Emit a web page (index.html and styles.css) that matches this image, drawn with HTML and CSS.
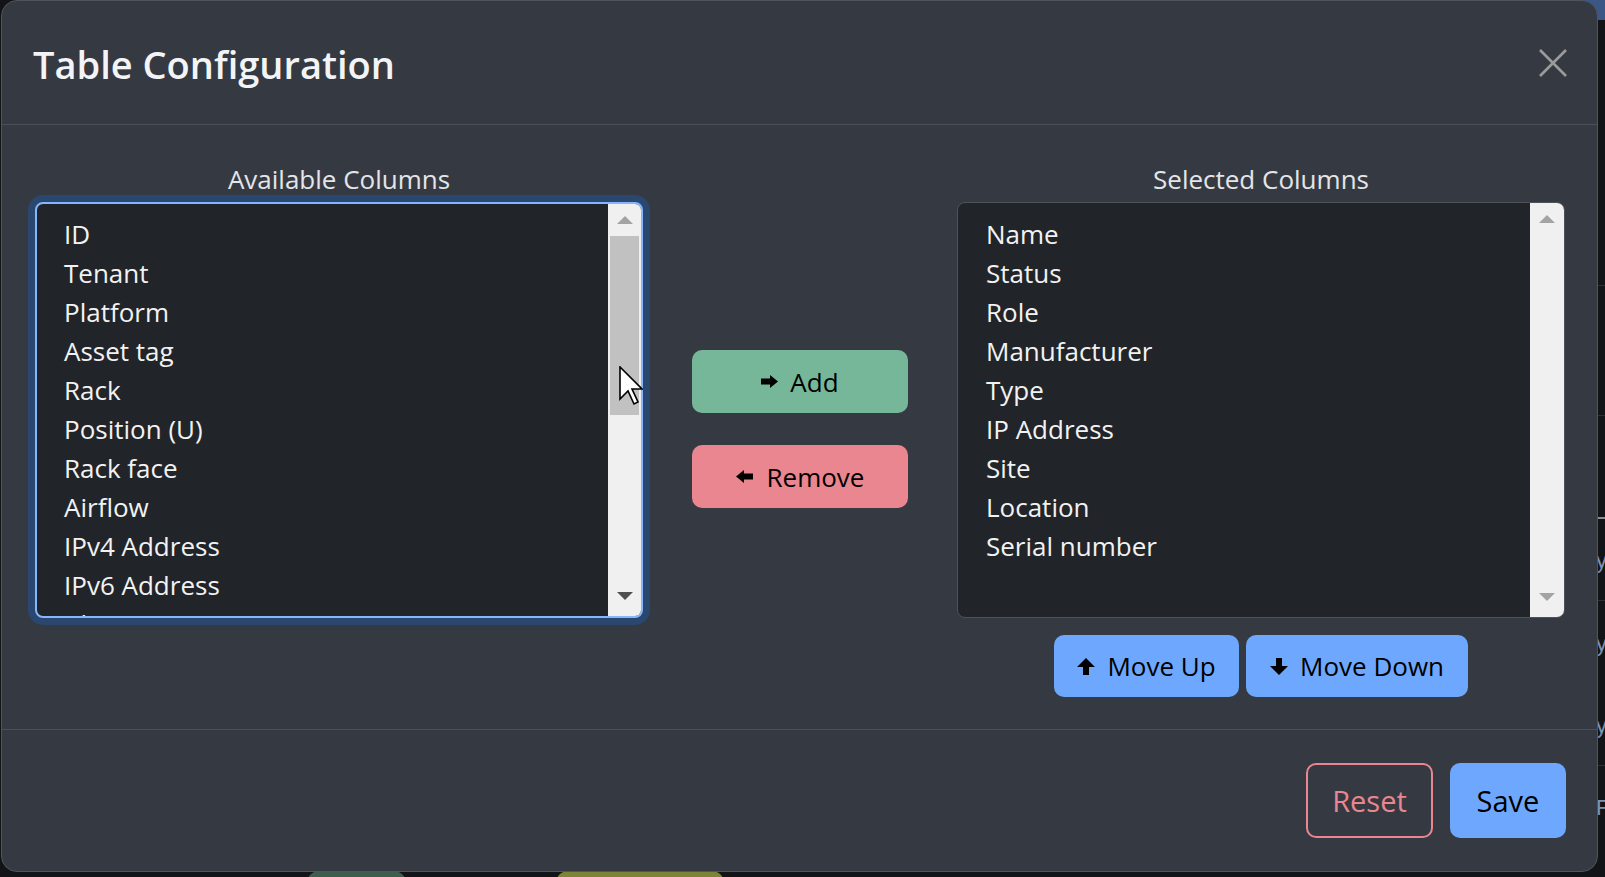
FILE: index.html
```html
<!DOCTYPE html>
<html lang="en">
<head>
<meta charset="utf-8">
<title>Table Configuration</title>
<link rel="stylesheet" href="styles.css">
</head>
<body>
<div class="backdrop">
  <div class="bg-blue"></div>
  <div class="bg-rule r1"></div>
  <div class="bg-rule r2"></div>
  <div class="bg-rule r3 light"></div>
  <div class="bg-rule r4"></div>
  <div class="bg-rule r5"></div>
  <span class="bg-letter l1">y</span>
  <span class="bg-letter l2">y</span>
  <span class="bg-letter l3">y</span>
  <span class="bg-letter l4">F</span>
  <div class="bg-pill green"></div>
  <div class="bg-pill olive"></div>
</div>

<div class="modal">
  <div class="modal-header">
    <h5 class="modal-title">Table Configuration</h5>
    <button class="btn-close" type="button" aria-label="Close">
      <svg viewBox="0 0 28 28" width="28" height="28"><path d="M1 1L27 27M27 1L1 27" stroke="#9b9b9b" stroke-width="2.6" fill="none"/></svg>
    </button>
  </div>

  <div class="modal-body">
    <div class="cols">
      <div class="col">
        <div class="col-label">Available Columns</div>
        <div class="listbox focused">
          <ul class="options">
            <li>ID</li>
            <li>Tenant</li>
            <li>Platform</li>
            <li>Asset tag</li>
            <li>Rack</li>
            <li>Position (U)</li>
            <li>Rack face</li>
            <li>Airflow</li>
            <li>IPv4 Address</li>
            <li>IPv6 Address</li>
            <li>Cluster</li>
          </ul>
          <div class="scrollbar">
            <div class="sb-btn up"><svg viewBox="0 0 16 8" width="16" height="8"><polygon points="0,8 8,0 16,8" fill="#a3a3a3"/></svg></div>
            <div class="sb-thumb"></div>
            <div class="sb-track"></div>
            <div class="sb-btn down"><svg viewBox="0 0 16 8" width="16" height="8"><polygon points="0,0 16,0 8,8" fill="#505050"/></svg></div>
          </div>
          <svg class="cursor" viewBox="0 0 24 40" width="24" height="40"><polygon points="1,1 1,33 9,25 15,38 19,36 13,23 23,23" fill="#ffffff" stroke="#000000" stroke-width="1.6" stroke-linejoin="miter"/></svg>
        </div>
      </div>

      <div class="mid">
        <button class="btn btn-add" type="button">
          <svg class="ico" viewBox="0 0 17 13" width="17" height="13"><polygon points="0,3.5 9,3.5 9,0 17,6.5 9,13 9,9.5 0,9.5" fill="#000"/></svg>
          <span>Add</span>
        </button>
        <button class="btn btn-remove" type="button">
          <svg class="ico" viewBox="0 0 17 13" width="17" height="13"><polygon points="17,3.5 8,3.5 8,0 0,6.5 8,13 8,9.5 17,9.5" fill="#000"/></svg>
          <span>Remove</span>
        </button>
      </div>

      <div class="col">
        <div class="col-label">Selected Columns</div>
        <div class="listbox">
          <ul class="options">
            <li>Name</li>
            <li>Status</li>
            <li>Role</li>
            <li>Manufacturer</li>
            <li>Type</li>
            <li>IP Address</li>
            <li>Site</li>
            <li>Location</li>
            <li>Serial number</li>
          </ul>
          <div class="scrollbar">
            <div class="sb-btn up"><svg viewBox="0 0 16 8" width="16" height="8"><polygon points="0,8 8,0 16,8" fill="#a3a3a3"/></svg></div>
            <div class="sb-track"></div>
            <div class="sb-btn down"><svg viewBox="0 0 16 8" width="16" height="8"><polygon points="0,0 16,0 8,8" fill="#a3a3a3"/></svg></div>
          </div>
        </div>
        <div class="move-btns">
          <button class="btn btn-move up-btn" type="button">
            <svg class="ico" viewBox="0 0 18 17" width="18" height="17"><polygon points="9,0 18,9 12,9 12,17 6,17 6,9 0,9" fill="#000"/></svg>
            <span>Move Up</span>
          </button>
          <button class="btn btn-move down-btn" type="button">
            <svg class="ico" viewBox="0 0 18 17" width="18" height="17"><polygon points="9,17 18,8 12,8 12,0 6,0 6,8 0,8" fill="#000"/></svg>
            <span>Move Down</span>
          </button>
        </div>
      </div>
    </div>
  </div>

  <div class="modal-footer">
    <button class="btn btn-reset" type="button">Reset</button>
    <button class="btn btn-save" type="button">Save</button>
  </div>
</div>
</body>
</html>
```

FILE: styles.css
```css
* { box-sizing: border-box; }

html, body {
  margin: 0;
  padding: 0;
  height: 100%;
}

body {
  position: relative;
  overflow: hidden;
  background: #131417;
  font-family: "Open Sans", "Noto Sans", "Liberation Sans", sans-serif;
  color: #dee2e6;
}

/* page content behind the modal overlay */
.backdrop {
  position: absolute;
  inset: 0;
  z-index: 0;
}
.bg-blue {
  position: absolute;
  right: 0;
  top: 0;
  width: 60px;
  height: 20px;
  background: #3a5786;
}
.bg-rule {
  position: absolute;
  right: 0;
  width: 20px;
  height: 1px;
  background: #2c2f34;
}
.bg-rule.light { background: #8a8d92; height: 2px; }
.r1 { top: 285px; }
.r2 { top: 415px; }
.r3 { top: 517px; }
.r4 { top: 600px; }
.r5 { top: 765px; }
.bg-letter {
  position: absolute;
  left: 1596px;
  font-family: "Liberation Sans", sans-serif;
  font-size: 22px;
  color: #7d93b3;
}
.l1 { top: 548px; }
.l2 { top: 631px; }
.l3 { top: 713px; }
.l4 { top: 795px; }
.bg-pill {
  position: absolute;
  top: 871px;
  height: 30px;
  border-radius: 12px;
}
.bg-pill.green { left: 307px; width: 99px; background: #3d5e4f; }
.bg-pill.olive { left: 556px; width: 168px; background: #7e8436; }

/* modal */
.modal {
  position: relative;
  z-index: 1;
  margin-left: 1px;
  width: 1597px;
  height: 872px;
  background: #353a42;
  border: 1px solid #50555c;
  border-radius: 16px;
  display: flex;
  flex-direction: column;
}

.modal-header {
  height: 124px;
  flex: none;
  display: flex;
  align-items: center;
  justify-content: space-between;
  padding: 0 30px 0 31px;
  border-bottom: 1px solid #4b5058;
}

.modal-title {
  margin: 4px 0 0 0;
  font-size: 38px;
  font-weight: 600;
  color: #f3f4f6;
  line-height: 1.2;
}

.btn-close {
  width: 28px;
  height: 28px;
  padding: 0;
  border: 0;
  background: transparent;
  display: flex;
}

.modal-body {
  flex: 1;
  padding: 36px 32px 0 33px;
}

.cols {
  display: grid;
  grid-template-columns: 608px 1fr 608px;
}

.col {
  display: flex;
  flex-direction: column;
}

.col-label {
  text-align: center;
  font-size: 26px;
  line-height: 36px;
  height: 36px;
  margin-bottom: 5px;
  color: #e3e5e8;
}

.listbox {
  position: relative;
  height: 416px;
  display: flex;
  background: #212529;
  border: 1px solid #4d5359;
  border-radius: 8px;
  overflow: hidden;
}

.listbox.focused {
  border: 2px solid #86b7fe;
  box-shadow: 0 0 0 7px #2a476f;
  overflow: visible;
}

.options {
  flex: 1;
  list-style: none;
  margin: 0;
  padding: 12px 0 0 28px;
  overflow: hidden;
  font-size: 26px;
  line-height: 39px;
  color: #f2f2f2;
  white-space: nowrap;
}

.listbox.focused .options {
  padding: 11px 0 0 27px;
  border-radius: 6px 0 0 6px;
}

.scrollbar {
  width: 34px;
  flex: none;
  background: #f0f0f0;
  display: flex;
  flex-direction: column;
}

.listbox.focused .scrollbar {
  width: 33px;
  border-radius: 0 6px 6px 0;
}

.sb-btn {
  height: 32px;
  flex: none;
  display: flex;
  justify-content: center;
  align-items: center;
}

.sb-btn.down {
  align-items: flex-start;
  padding-top: 8px;
}

.sb-thumb {
  height: 179px;
  margin: 0 2px;
  background: #c1c1c1;
}

.sb-track { flex: 1; }

.cursor {
  position: absolute;
  left: 582px;
  top: 162px;
}

/* buttons */
.btn {
  font-family: inherit;
  border: 0;
  color: #000;
  display: inline-flex;
  align-items: center;
  justify-content: center;
  gap: 12px;
  padding: 0;
  cursor: pointer;
}

.mid {
  align-self: center;
  display: flex;
  flex-direction: column;
  align-items: center;
  gap: 32px;
}

.btn-add,
.btn-remove {
  width: 216px;
  height: 63px;
  border-radius: 10px;
  font-size: 26px;
}

.btn-add { background: #75b798; }
.btn-remove { background: #ea868f; gap: 14px; }

.move-btns {
  margin-top: 17px;
  display: flex;
  justify-content: center;
  gap: 7px;
}

.btn-move {
  height: 62px;
  border-radius: 10px;
  background: #6ea8fe;
  font-size: 26px;
}

.up-btn { width: 185px; }
.down-btn { width: 222px; }

.modal-footer {
  height: 142px;
  flex: none;
  border-top: 1px solid #4b5058;
  display: flex;
  justify-content: flex-end;
  align-items: center;
  gap: 17px;
  padding: 0 31px 0 0;
}

.btn-reset,
.btn-save {
  height: 75px;
  border-radius: 10px;
  font-size: 29px;
}

.btn-reset {
  width: 127px;
  background: transparent;
  border: 2px solid #ea868f;
  color: #ea868f;
}

.btn-save {
  width: 116px;
  background: #6ea8fe;
}
```
